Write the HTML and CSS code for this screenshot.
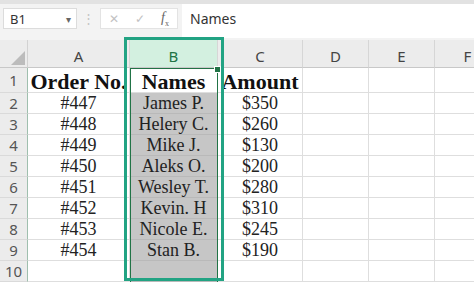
FILE: index.html
```html
<!DOCTYPE html>
<html lang="en">
<head>
    <meta charset="UTF-8">
    <meta name="viewport" content="width=device-width, initial-scale=1.0">
    <title>Names column</title>
    <link rel="stylesheet" href="styles.css">
</head>
<body>
    <div class="sheet">
        <div class="formula-bar">
            <div class="name-box">B1<span class="drop">&#9662;</span></div>
            <div class="grip">&#8942;</div>
            <div class="fx-box">
                <span class="fx-btn">&#10005;</span>
                <span class="fx-btn">&#10003;</span>
                <span class="fx-btn fx"><i>f</i><sub>x</sub></span>
            </div>
            <div class="formula">Names</div>
        </div>

        <div class="grid">
            <div class="corner"><span class="tri"></span></div>
            <div class="col-head">A</div>
            <div class="col-head sel">B</div>
            <div class="col-head">C</div>
            <div class="col-head">D</div>
            <div class="col-head">E</div>
            <div class="col-head">F</div>

            <div class="row-head">1</div>
            <div class="cell title">Order No.</div>
            <div class="cell title active">Names</div>
            <div class="cell title">Amount</div>
            <div class="cell"></div><div class="cell"></div><div class="cell"></div>

            <div class="row-head">2</div>
            <div class="cell">#447</div><div class="cell picked">James P.</div><div class="cell">$350</div>
            <div class="cell"></div><div class="cell"></div><div class="cell"></div>

            <div class="row-head">3</div>
            <div class="cell">#448</div><div class="cell picked">Helery C.</div><div class="cell">$260</div>
            <div class="cell"></div><div class="cell"></div><div class="cell"></div>

            <div class="row-head">4</div>
            <div class="cell">#449</div><div class="cell picked">Mike J.</div><div class="cell">$130</div>
            <div class="cell"></div><div class="cell"></div><div class="cell"></div>

            <div class="row-head">5</div>
            <div class="cell">#450</div><div class="cell picked">Aleks O.</div><div class="cell">$200</div>
            <div class="cell"></div><div class="cell"></div><div class="cell"></div>

            <div class="row-head">6</div>
            <div class="cell">#451</div><div class="cell picked">Wesley T.</div><div class="cell">$280</div>
            <div class="cell"></div><div class="cell"></div><div class="cell"></div>

            <div class="row-head">7</div>
            <div class="cell">#452</div><div class="cell picked">Kevin. H</div><div class="cell">$310</div>
            <div class="cell"></div><div class="cell"></div><div class="cell"></div>

            <div class="row-head">8</div>
            <div class="cell">#453</div><div class="cell picked">Nicole E.</div><div class="cell">$245</div>
            <div class="cell"></div><div class="cell"></div><div class="cell"></div>

            <div class="row-head">9</div>
            <div class="cell">#454</div><div class="cell picked">Stan B.</div><div class="cell">$190</div>
            <div class="cell"></div><div class="cell"></div><div class="cell"></div>

            <div class="row-head">10</div>
            <div class="cell"></div><div class="cell picked"></div><div class="cell"></div>
            <div class="cell"></div><div class="cell"></div><div class="cell"></div>
        </div>

        <!-- selection border of column B and the marker drawn over it -->
        <div class="selection"><span class="handle"></span></div>
        <div class="highlight"></div>
    </div>
</body>
</html>
```

FILE: styles.css
```css
body {
    margin: 0;
    background: #fff;
}
.sheet {
    position: relative;
    width: 474px;
    height: 282px;
    overflow: hidden;
    font-family: "Noto Sans", "Open Sans", sans-serif;
}

/* formula bar */
.formula-bar {
    display: flex;
    align-items: flex-start;
    height: 36px;
    background: #f3f3f3;
    border-top: 4px solid #e2e2e2;
}
.name-box {
    display: flex;
    justify-content: space-between;
    align-items: center;
    box-sizing: border-box;
    width: 74px;
    height: 21px;
    margin: 4px 0 0 3px;
    padding: 0 5px 0 6px;
    background: #fff;
    border: 1px solid #dcdcdc;
    font-size: 13px;
    color: #333;
}
.drop {
    font-size: 10px;
    color: #666;
}
.grip {
    width: 23px;
    margin-top: 5px;
    text-align: center;
    font-size: 13px;
    color: #c4c4c4;
}
.fx-box {
    display: flex;
    justify-content: space-around;
    align-items: center;
    box-sizing: border-box;
    width: 78px;
    height: 21px;
    margin-top: 4px;
    background: #fff;
    border: 1px solid #e3e3e3;
}
.fx-btn {
    font-size: 12px;
    color: #c2c2c2;
}
.fx-btn.fx {
    font-family: "Liberation Serif", serif;
    font-size: 14px;
    color: #666;
}
.fx-btn sub {
    font-size: 8px;
}
.formula {
    flex: 1;
    height: 34px;
    margin-left: 4px;
    padding: 5px 0 0 8px;
    box-sizing: border-box;
    background: #fff;
    font-size: 14px;
    color: #333;
}

/* grid */
.grid {
    display: grid;
    grid-template-columns: 28px 102px 88px 85px 66px 66px 66px;
    grid-template-rows: 28px 25px repeat(9, 21px);
}
.corner {
    position: relative;
    background: #ececec;
    border-right: 1px solid #d2d2d2;
    border-bottom: 1px solid #c8c8c8;
}
.tri {
    position: absolute;
    right: 2px;
    bottom: 2px;
    width: 0;
    height: 0;
    border-left: 14px solid transparent;
    border-bottom: 14px solid #bcbcbc;
}
.col-head {
    display: flex;
    align-items: center;
    justify-content: center;
    padding-top: 4px;
    background: #ececec;
    border-right: 1px solid #d6d6d6;
    border-bottom: 1px solid #c8c8c8;
    font-size: 15px;
    color: #444;
}
.col-head.sel {
    background: #d3f0e0;
    color: #217346;
}
.row-head {
    display: flex;
    align-items: center;
    justify-content: center;
    background: #ececec;
    border-right: 1px solid #9fbfae;
    border-bottom: 1px solid #dadada;
    font-size: 15px;
    color: #555;
}
.cell {
    display: flex;
    align-items: center;
    justify-content: center;
    border-right: 1px solid #dedede;
    border-bottom: 1px solid #dedede;
    font-family: "Liberation Serif", "DejaVu Serif", serif;
    font-size: 18px;
    color: #222;
    white-space: nowrap;
}
.cell.title {
    padding-top: 3px;
    font-size: 22px;
    font-weight: bold;
    color: #111;
}
.cell.picked {
    background: #c6c6c6;
    border-bottom-color: #b9b9b9;
}
.cell.active {
    background: #fff;
}

/* overlays */
.selection {
    position: absolute;
    left: 130px;
    top: 68px;
    width: 86px;
    height: 220px;
    border: 1.5px solid #217346;
}
.handle {
    position: absolute;
    right: -4px;
    top: -3px;
    width: 5px;
    height: 5px;
    background: #217346;
    border: 1px solid #fff;
}
.highlight {
    position: absolute;
    left: 124px;
    top: 37px;
    width: 100px;
    height: 244px;
    box-sizing: border-box;
    border: 3px solid #22a383;
}
```
